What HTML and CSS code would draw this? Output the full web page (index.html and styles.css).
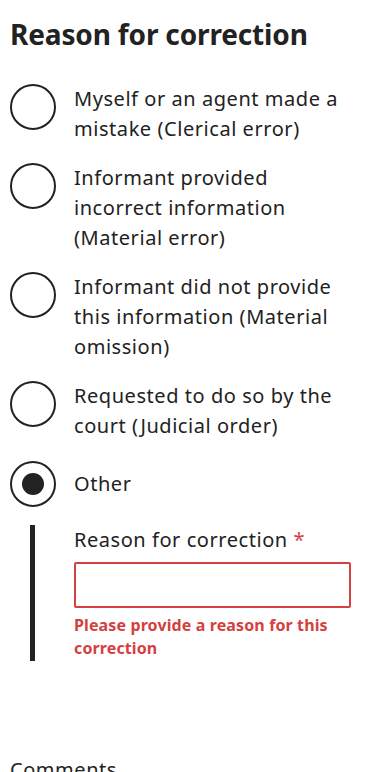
FILE: index.html
```html
<!DOCTYPE html>
<html lang="en">
<head>
<meta charset="utf-8">
<title>Reason for correction</title>
<link rel="stylesheet" href="styles.css">
</head>
<body>
<main class="page">
  <h1 class="title">Reason for correction</h1>
  <div class="radios">
    <label class="radio">
      <span class="circle"></span>
      <span class="radio-text">Myself or an agent made a mistake (Clerical error)</span>
    </label>
    <label class="radio">
      <span class="circle"></span>
      <span class="radio-text">Informant provided incorrect information (Material error)</span>
    </label>
    <label class="radio">
      <span class="circle"></span>
      <span class="radio-text">Informant did not provide this information (Material omission)</span>
    </label>
    <label class="radio">
      <span class="circle"></span>
      <span class="radio-text">Requested to do so by the court (Judicial order)</span>
    </label>
    <label class="radio radio-single">
      <span class="circle checked"></span>
      <span class="radio-text">Other</span>
    </label>
  </div>
  <div class="nested">
    <div class="nested-bar"></div>
    <div class="nested-body">
      <div class="field-label">Reason for correction <span class="req">*</span></div>
      <div class="input"></div>
      <div class="error">Please provide a reason for this correction</div>
    </div>
  </div>
  <div class="comments">Comments</div>
</main>
</body>
</html>
```
FILE: styles.css
```css
* { box-sizing: border-box; }
html, body { margin: 0; padding: 0; background: #fff; }
body {
  font-family: "Noto Sans", "Open Sans", sans-serif;
  color: #222222;
}
.page {
  padding: 16px 15px 0 10px;
}
.title {
  margin: 0;
  font-size: 28px;
  line-height: 36px;
  font-weight: 700;
  letter-spacing: -0.15px;
  color: #222222;
}
.radios {
  margin-top: 32px;
  display: flex;
  flex-direction: column;
  gap: 19px;
}
.radio {
  display: flex;
  align-items: flex-start;
  gap: 18px;
}
.radio-single {
  align-items: center;
  margin-top: 1px;
}
.circle {
  flex: 0 0 46px;
  width: 46px;
  height: 46px;
  border: 2px solid #222222;
  border-radius: 50%;
  display: flex;
  align-items: center;
  justify-content: center;
}
.circle.checked::after {
  content: "";
  width: 22px;
  height: 22px;
  border-radius: 50%;
  background: #222222;
}
.radio-text {
  font-size: 20px;
  line-height: 30px;
  letter-spacing: 0.55px;
  color: #222222;
}
.nested {
  margin-top: 18px;
  display: flex;
}
.nested-bar {
  flex: 0 0 5px;
  margin-left: 20px;
  background: #222222;
}
.nested-body {
  flex: 1;
  margin-left: 39px;
  padding-bottom: 1px;
}
.field-label {
  font-size: 20px;
  line-height: 30px;
  letter-spacing: 0.55px;
}
.req { color: #d53f3f; }
.input {
  margin-top: 7px;
  height: 46px;
  border: 2px solid #d53f3f;
  border-radius: 2px;
  background: #fff;
}
.error {
  margin-top: 6px;
  font-size: 16px;
  line-height: 23px;
  font-weight: 700;
  letter-spacing: 0.12px;
  color: #d53f3f;
}
.comments {
  margin-top: 94px;
  font-size: 20px;
  line-height: 30px;
  letter-spacing: 0.55px;
}
```
